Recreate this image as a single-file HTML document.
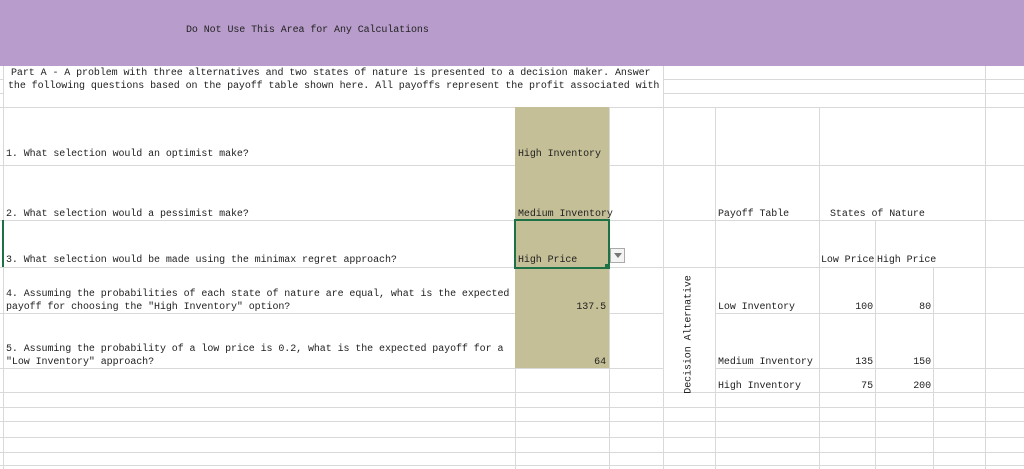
<!DOCTYPE html>
<html><head><meta charset="utf-8"><style>
body{margin:0;width:1024px;height:469px;background:#fff;position:relative;overflow:hidden;font-family:"Liberation Mono","Noto Serif CJK SC",monospace;font-size:10px;color:#222;letter-spacing:-0.08px}
.h{position:absolute;left:0;width:1024px;height:1px;background:#d9d9d9}
.v{position:absolute;width:1px;background:#d9d9d9}
.t{position:absolute;white-space:nowrap;line-height:11px}
.r{text-align:right}
</style></head><body>
<div style="position:absolute;left:0;top:0;width:1024px;height:66px;background:#b89ccb"></div>
<div class="t" style="left:186px;top:25px">Do Not Use This Area for Any Calculations</div>
<div class="h" style="top:79px"></div>
<div class="h" style="top:93px"></div>
<div class="h" style="top:107px"></div>
<div class="h" style="top:165px"></div>
<div class="h" style="top:220px"></div>
<div class="h" style="top:267px"></div>
<div class="h" style="top:313px;left:0;width:663px"></div>
<div class="h" style="top:313px;left:715px;width:309px"></div>
<div class="h" style="top:368px;left:0;width:663px"></div>
<div class="h" style="top:368px;left:715px;width:309px"></div>
<div class="h" style="top:392px"></div>
<div class="h" style="top:407px"></div>
<div class="h" style="top:421px"></div>
<div class="h" style="top:437px"></div>
<div class="h" style="top:452px"></div>
<div class="h" style="top:465px"></div>
<div class="v" style="left:3px;top:66px;height:403px"></div>
<div class="v" style="left:515px;top:93px;height:376px"></div>
<div class="v" style="left:609px;top:93px;height:376px"></div>
<div class="v" style="left:663px;top:66px;height:403px"></div>
<div class="v" style="left:715px;top:107px;height:362px"></div>
<div class="v" style="left:819px;top:107px;height:362px"></div>
<div class="v" style="left:875px;top:220px;height:249px"></div>
<div class="v" style="left:933px;top:267px;height:202px"></div>
<div class="v" style="left:985px;top:66px;height:403px"></div>
<div style="position:absolute;left:3px;top:66px;width:660px;height:41px;background:#fff"></div>
<div class="v" style="left:3px;top:66px;height:41px"></div>
<div class="h" style="top:107px"></div>
<div style="position:absolute;left:515px;top:107px;width:94px;height:261px;background:#c4bf96"></div>
<div style="position:absolute;left:2px;top:220px;width:2px;height:47px;background:#1e7145"></div>
<div class="t" style="left:11px;top:68px">Part A - A problem with three alternatives and two states of nature is presented to a decision maker. Answer</div>
<div class="t" style="left:8px;top:81px">the following questions based on the payoff table shown here. All payoffs represent the profit associated with</div>
<div class="t" style="left:6px;top:149px">1. What selection would an optimist make?</div>
<div class="t" style="left:518px;top:149px">High Inventory</div>
<div class="t" style="left:6px;top:209px">2. What selection would a pessimist make?</div>
<div class="t" style="left:518px;top:209px">Medium Inventory</div>
<div class="t" style="left:718px;top:209px">Payoff Table</div>
<div class="t" style="left:830px;top:209px">States of Nature</div>
<div class="t" style="left:6px;top:255px">3. What selection would be made using the minimax regret approach?</div>
<div style="position:absolute;left:514px;top:219px;width:92px;height:46px;border:2px solid #1e7145"></div>
<div style="position:absolute;left:605px;top:264px;width:4px;height:4px;background:#1e7145"></div>
<div class="t" style="left:518px;top:255px">High Price</div>
<div style="position:absolute;left:610px;top:248px;width:13px;height:13px;border:1px solid #aaa;background:#f4f4f4"><div style="position:absolute;left:3px;top:4px;width:0;height:0;border-left:4px solid transparent;border-right:4px solid transparent;border-top:5px solid #777"></div></div>
<div class="t" style="left:821px;top:255px">Low Price</div>
<div class="t" style="left:877px;top:255px">High Price</div>
<div class="t" style="left:6px;top:289px">4. Assuming the probabilities of each state of nature are equal, what is the expected</div>
<div class="t" style="left:6px;top:302px">payoff for choosing the "High Inventory" option?</div>
<div class="t r" style="left:515px;width:91px;top:302px">137.5</div>
<div class="t" style="left:718px;top:302px">Low Inventory</div>
<div class="t r" style="left:819px;width:54px;top:302px">100</div>
<div class="t r" style="left:875px;width:56px;top:302px">80</div>
<div class="t" style="left:6px;top:344px">5. Assuming the probability of a low price is 0.2, what is the expected payoff for a</div>
<div class="t" style="left:6px;top:357px">"Low Inventory" approach?</div>
<div class="t r" style="left:515px;width:91px;top:357px">64</div>
<div class="t" style="left:718px;top:357px">Medium Inventory</div>
<div class="t r" style="left:819px;width:54px;top:357px">135</div>
<div class="t r" style="left:875px;width:56px;top:357px">150</div>
<div class="t" style="left:718px;top:381px">High Inventory</div>
<div class="t r" style="left:819px;width:54px;top:381px">75</div>
<div class="t r" style="left:875px;width:56px;top:381px">200</div>
<div style="position:absolute;left:664px;top:268px;width:51px;height:124px;background:#fff"></div>
<div class="t" style="left:629px;top:329px;width:120px;text-align:center;transform:rotate(-90deg)">Decision Alternative</div>
</body></html>
